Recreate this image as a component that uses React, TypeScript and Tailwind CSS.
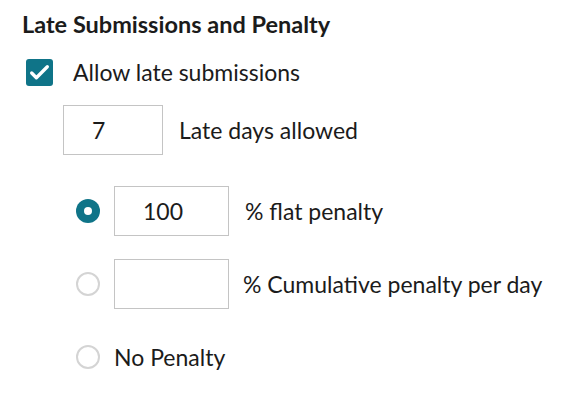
import { FC, ReactNode } from "react";

const Radio: FC<{ checked?: boolean }> = ({ checked = false }) =>
  checked ? (
    <span className="flex h-6 w-6 shrink-0 items-center justify-center rounded-full bg-[#0f7488]">
      <span className="h-2 w-2 rounded-full bg-white"></span>
    </span>
  ) : (
    <span className="h-6 w-6 shrink-0 rounded-full border-2 border-[#d4d4d4] bg-white"></span>
  );

const Box: FC<{ value?: string; className?: string }> = ({ value = "", className = "" }) => (
  <div className={`flex h-[50px] shrink-0 items-center border border-[#c4c4c4] bg-white pl-[28px] ${className}`}>
    {value}
  </div>
);

const Row: FC<{ className?: string; children: ReactNode }> = ({ className = "", children }) => (
  <div className={`flex items-center ${className}`}>{children}</div>
);

export default function App() {
  return (
    <div className="min-h-screen bg-white pl-[22px] pt-[10px] text-[23px] leading-[28px] text-[#1b1b1b] [font-family:Lato,'Noto_Sans',sans-serif]">
      <h2 className="text-[23.5px] font-bold leading-[28px]">Late Submissions and Penalty</h2>

      <Row className="mt-[20px] pl-[4px]">
        <span className="flex h-[27px] w-[27px] items-center justify-center rounded-[3px] bg-[#0f7488]">
          <svg viewBox="0 0 24 24" className="h-[25px] w-[25px]" fill="none" stroke="white" strokeWidth="3.2" strokeLinecap="round" strokeLinejoin="round">
            <path d="M4.5 12.5l4.5 4.5 10.5-10.5" />
          </svg>
        </span>
        <span className="ml-[20px]">Allow late submissions</span>
      </Row>

      <Row className="mt-[19px] pl-[41px]">
        <Box value="7" className="w-[100px]" />
        <span className="ml-[16px]">Late days allowed</span>
      </Row>

      <Row className="mt-[31px] pl-[54px]">
        <Radio checked />
        <Box value="100" className="ml-[14px] w-[115px]" />
        <span className="ml-[16px]">% flat penalty</span>
      </Row>

      <Row className="mt-[23px] pl-[54px]">
        <Radio />
        <Box className="ml-[14px] w-[115px]" />
        <span className="ml-[14px]">% Cumulative penalty per day</span>
      </Row>

      <Row className="mt-[34px] pl-[54px]">
        <Radio />
        <span className="ml-[14px]">No Penalty</span>
      </Row>
    </div>
  );
}
